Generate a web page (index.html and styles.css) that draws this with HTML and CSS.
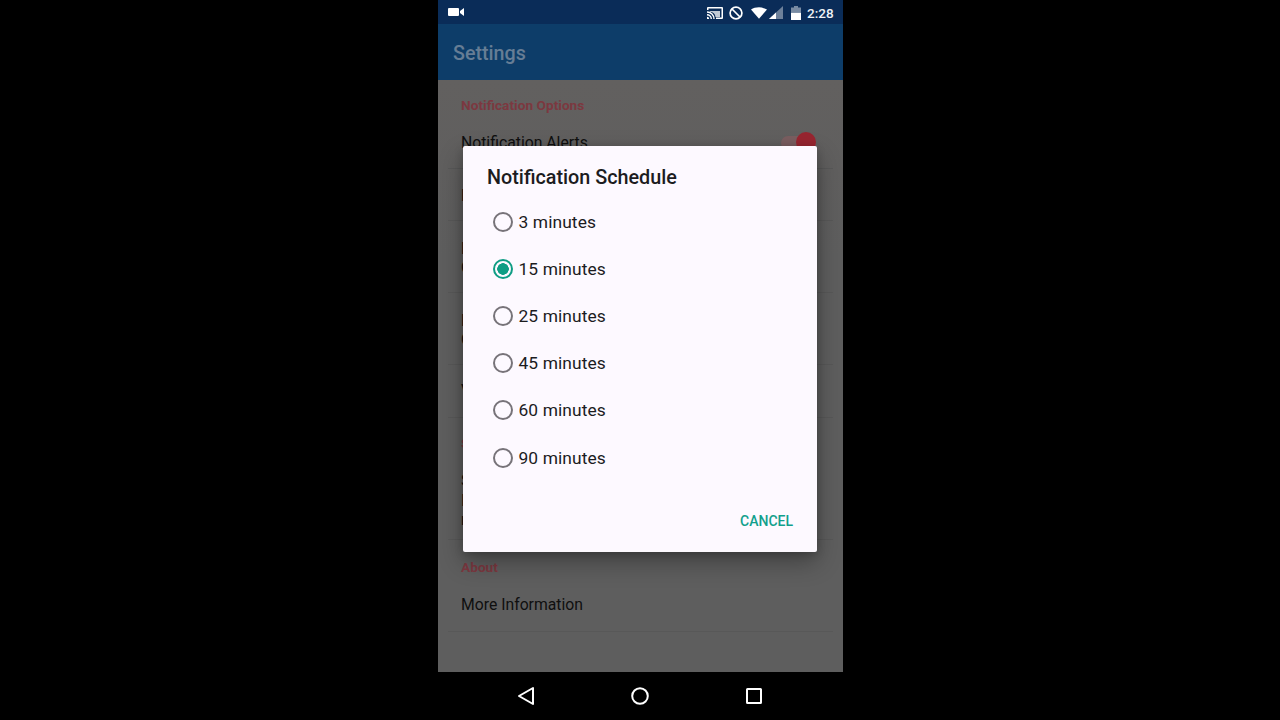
FILE: index.html
```html
<!DOCTYPE html>
<html lang="en">
<head>
<meta charset="utf-8">
<title>Settings</title>
<link rel="stylesheet" href="styles.css">
</head>
<body>
<div class="phone">
  <div class="statusbar">
    <svg class="ic-video" viewBox="0 0 16 8"><path d="M0 1a1 1 0 0 1 1-1h9a1 1 0 0 1 1 1v6a1 1 0 0 1-1 1H1a1 1 0 0 1-1-1zM12 3l4-3v8l-4-3z"/></svg>
    <div class="status-right">
      <svg class="ic-cast" viewBox="0 0 16 12"><path d="M1 0h14a1 1 0 0 1 1 1v10a1 1 0 0 1-1 1H9v-1.500h5.500v-9h-13V3H0V1a1 1 0 0 1 1-1z"/><path d="M3 4h10v6H8.500A6 6 0 0 0 3 4.800z" opacity=".75"/><path d="M0 4.300A7.700 7.700 0 0 1 7.700 12H6.300A6.300 6.300 0 0 0 0 5.700zM0 7a5 5 0 0 1 5 5H3.600A3.600 3.600 0 0 0 0 8.400zM0 9.800A2.200 2.200 0 0 1 2.200 12H0z"/></svg>
      <svg class="ic-block" viewBox="0 0 14 14"><circle cx="7" cy="7" r="5.900" fill="none" stroke="#fff" stroke-width="1.700"/><path d="M3 3l8 8" stroke="#fff" stroke-width="1.700"/></svg>
      <svg class="ic-wifi" viewBox="0 0 17 12"><path d="M8.500 12L0 2.400C2.300.9 5.200 0 8.500 0s6.200.9 8.500 2.400z"/></svg>
      <svg class="ic-signal" viewBox="0 0 14 13"><path d="M0 13L14 0v13z" opacity=".4"/><path d="M0 13l7-6.500V13z"/></svg>
      <svg class="ic-battery" viewBox="0 0 10 14"><path d="M3 0h4v1.500h3V6H0V1.500h3z" opacity=".45"/><path d="M0 6.500h10V14H0z"/></svg>
      <span class="clock">2:28</span>
    </div>
  </div>
  <div class="appbar">Settings</div>
  <div class="settings">
    <div class="section-title first">Notification Options</div>
    <div class="row row-one">
      <span>Notification Alerts</span>
      <span class="toggle"><span class="thumb"></span></span>
    </div>
    <div class="row row-single">Notification Schedule</div>
    <div class="row row-double"><span>Notification Hours</span><span>Only during set hours</span></div>
    <div class="row row-double"><span>Notification Days</span><span>Only on set days</span></div>
    <div class="row row-last">Vibrate</div>
    <div class="section-title second">Sound</div>
    <div class="row row-triple"><span>Select a sound</span><span>It plays with each</span><span>reminder</span></div>
    <div class="section-title third">About</div>
    <div class="row row-more">More Information</div>
  </div>
  <div class="navbar">
    <svg class="ic-back" viewBox="0 0 18 20"><path d="M16 2v16L2 10z" fill="none" stroke="#fff" stroke-width="2" stroke-linejoin="round"/></svg>
    <svg class="ic-home" viewBox="0 0 18 18"><circle cx="9" cy="9" r="7.800" fill="none" stroke="#fff" stroke-width="2"/></svg>
    <svg class="ic-recent" viewBox="0 0 16 16"><rect x="1" y="1" width="14" height="14" rx=".5" fill="none" stroke="#fff" stroke-width="2"/></svg>
  </div>

  <div class="dialog">
    <div class="dialog-title">Notification Schedule</div>
    <div class="options">
      <div class="option"><span class="radio"></span>3 minutes</div>
      <div class="option"><span class="radio checked"></span>15 minutes</div>
      <div class="option"><span class="radio"></span>25 minutes</div>
      <div class="option"><span class="radio"></span>45 minutes</div>
      <div class="option"><span class="radio"></span>60 minutes</div>
      <div class="option"><span class="radio"></span>90 minutes</div>
    </div>
    <div class="actions"><span class="cancel">CANCEL</span></div>
  </div>
</div>
</body>
</html>
```
FILE: styles.css
```css
* { box-sizing: border-box; }
html, body { margin: 0; height: 100%; }
body { background: #000; font-family: Roboto, "Liberation Sans", sans-serif; overflow: hidden; }
.phone {
  position: relative;
  width: 405px;
  height: 720px;
  margin-left: 438px;
  display: flex;
  flex-direction: column;
  background: #5e5e5e;
}
.statusbar {
  height: 24px;
  background: #0a2c58;
  display: flex;
  align-items: center;
  justify-content: space-between;
  padding: 1px 9px 0 10px;
  flex: none;
}
.statusbar svg { fill: #fff; display: block; }
.ic-video { width: 16px; height: 8px; margin-bottom: 2px; }
.status-right { display: flex; align-items: center; }
.ic-cast { width: 16px; height: 12px; margin-right: 6px; }
.ic-block { width: 14px; height: 14px; margin-right: 8px; }
.ic-wifi { width: 16px; height: 12px; margin-right: 2px; }
.ic-signal { width: 14px; height: 13px; margin-right: 8px; }
.ic-battery { width: 10px; height: 14px; margin-right: 6px; }
.clock { color: #eef2f6; font-size: 13.500px; font-weight: 500; width: 27px; }
.appbar {
  height: 56px;
  flex: none;
  background: #0d3d69;
  color: #667d95;
  font-size: 19.700px;
  font-weight: 500;
  line-height: 59px;
  padding-left: 15px;
}
.settings {
  flex: 1;
  background: linear-gradient(#62605f, #5e5e5e 30%);
  padding: 0 10px;
  color: #0f0f0f;
  font-size: 15.750px;
  overflow: hidden;
}
.section-title {
  color: #7c3840;
  font-size: 13.700px;
  font-weight: 700;
  line-height: 16px;
  padding-left: 13px;
}
.section-title.first { margin-top: 17px; margin-bottom: 1px; }
.section-title.second { margin-top: 17px; }
.section-title.third { margin-top: 19px; margin-bottom: 1px; }
.row {
  display: flex;
  flex-direction: column;
  justify-content: center;
  padding-left: 13px;
  padding-top: 3px;
  border-bottom: 1px solid #585858;
  line-height: 19.500px;
}
.row-one { height: 55px; padding-top: 4px; flex-direction: row; align-items: center; justify-content: space-between; padding-right: 17px; }
.row-single { height: 52px; }
.row-double { height: 72px; }
.row-last { height: 53px; padding-top: 0; }
.row-triple { height: 89px; padding-top: 11px; }
.row-more { height: 56px; padding-top: 3px; }
.toggle { position: relative; width: 35px; height: 14px; border-radius: 7px; background: #7a5e60; display: block; }
.thumb { position: absolute; right: 0; top: -4px; width: 20px; height: 20px; border-radius: 50%; background: #982530; }
.navbar {
  height: 48px;
  flex: none;
  background: #000;
  position: relative;
  display: flex;
  align-items: center;
  padding: 0 81px 0 79px;
  justify-content: space-between;
}
.navbar svg { display: block; }
.ic-back { width: 18px; height: 20px; }
.ic-home { width: 18px; height: 18px; margin-right: 2px; }
.ic-recent { width: 16px; height: 16px; }
.dialog {
  position: absolute;
  left: 25px;
  top: 146px;
  width: 354px;
  height: 406px;
  background: #fdf9ff;
  border-radius: 2px;
  box-shadow: 0 10px 24px rgba(0, 0, 0, .32), 0 2px 8px rgba(0, 0, 0, .18);
  display: flex;
  flex-direction: column;
  color: #1c1c1e;
}
.dialog-title {
  font-size: 19.800px;
  font-weight: 500;
  line-height: 24px;
  padding: 20px 24px 0;
}
.options { margin-top: 8px; padding-left: 30px; }
.option {
  height: 47.200px;
  display: flex;
  align-items: center;
  font-size: 17.400px;
  letter-spacing: .1px;
}
.radio {
  width: 20px;
  height: 20px;
  border: 2px solid #777379;
  border-radius: 50%;
  margin-right: 5.500px;
  flex: none;
}
.radio.checked {
  border-color: #0f9d84;
  background: radial-gradient(circle, #0f9d84 0 5.500px, transparent 6px);
}
.actions { margin-top: auto; padding: 0 24px 22px 0; text-align: right; }
.cancel { color: #12a08c; font-size: 14px; font-weight: 500; line-height: 18px; display: inline-block; }
```
